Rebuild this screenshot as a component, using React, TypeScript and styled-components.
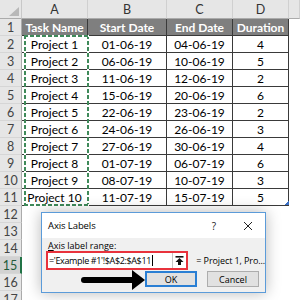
import React from "react";
import styled, { createGlobalStyle } from "styled-components";

const GlobalStyle = createGlobalStyle`
  html, body { margin: 0; padding: 0; background: #fff; }
  body { width: 300px; height: 300px; overflow: hidden; }
  * { box-sizing: border-box; }
`;

const Sheet = styled.div`
  position: relative;
  width: 300px;
  height: 300px;
  overflow: hidden;
  font-family: Lato, "Liberation Sans", sans-serif;
`;

const Grid = styled.div`
  display: grid;
  grid-template-columns: 22px 66px 79px 66px 56px 11px;
  grid-template-rows: 19px repeat(17, 17px);
`;

const Corner = styled.div`
  background: #e6e6e6;
  border-right: 1px solid #c8c8c8;
  border-bottom: 1px solid #ababab;
  display: flex;
  align-items: flex-end;
  justify-content: flex-end;
  padding: 0 2px 2px 0;
`;

const ColHead = styled.div`
  background: #e6e6e6;
  border-right: 1px solid #d0d0d0;
  border-bottom: 1px solid #ababab;
  color: #333;
  font-size: 12.5px;
  display: flex;
  align-items: center;
  justify-content: center;
`;

const RowHead = styled.div<{ $active?: boolean }>`
  background: ${(p) => (p.$active ? "#d2d2d2" : "#e6e6e6")};
  border-right: ${(p) => (p.$active ? "2px solid #217346" : "1px solid #ababab")};
  border-bottom: 1px solid #d6d6d6;
  color: ${(p) => (p.$active ? "#1f5b3a" : "#444")};
  font-size: 12.5px;
  display: flex;
  align-items: center;
  justify-content: center;
`;

const Cell = styled.div<{ $head?: boolean; $table?: boolean }>`
  background: ${(p) => (p.$head ? "#7f7f7f" : "#fff")};
  color: ${(p) => (p.$head ? "#fff" : "#000")};
  font-weight: ${(p) => (p.$head ? 700 : 400)};
  border-right: ${(p) => (p.$table ? "1px solid #3a3a3a" : "none")};
  border-bottom: ${(p) => (p.$table ? "1px solid #3a3a3a" : "none")};
  font-size: 12px;
  white-space: nowrap;
  display: flex;
  align-items: center;
  justify-content: center;
`;

const Ants = styled.div`
  position: absolute;
  left: 24px;
  top: 35px;
  width: 65px;
  height: 171px;
  pointer-events: none;
  background:
    repeating-linear-gradient(90deg, #3f8a5a 0 4px, #fff 4px 6px) top / 100% 2px no-repeat,
    repeating-linear-gradient(90deg, #3f8a5a 0 4px, #fff 4px 6px) bottom / 100% 2px no-repeat,
    repeating-linear-gradient(180deg, #3f8a5a 0 4px, #fff 4px 6px) left / 2px 100% no-repeat,
    repeating-linear-gradient(180deg, #3f8a5a 0 4px, #fff 4px 6px) right / 2px 100% no-repeat;
`;

const ResizeHandle = styled.div`
  position: absolute;
  left: 285px;
  top: 201px;
  width: 4px;
  height: 4px;
  background: linear-gradient(135deg, transparent 50%, #3a6fc4 50%);
`;

const Dialog = styled.div`
  position: absolute;
  left: 41px;
  top: 212px;
  width: 225px;
  height: 81px;
  border: 1px solid #5b9bd9;
  background: #f0f0f0;
  box-shadow: 0 0 14px rgba(0, 0, 0, 0.28);
  font-family: "Segoe UI", "Open Sans", "Noto Sans", sans-serif;
  color: #000;
  display: flex;
  flex-direction: column;
`;

const TitleBar = styled.div`
  height: 25px;
  background: #fff;
  display: flex;
  align-items: center;
  padding-left: 6px;
`;

const Title = styled.span`
  flex: 1;
  font-size: 9.5px;
  letter-spacing: -0.1px;
`;

const TitleBtn = styled.div`
  width: 34px;
  height: 25px;
  display: flex;
  align-items: center;
  justify-content: center;
  font-size: 10px;
  color: #222;
`;

const Body = styled.div`
  flex: 1;
  padding: 2px 0 0 4px;
  display: flex;
  flex-direction: column;
`;

const Label = styled.div`
  height: 11px;
  margin-left: 2px;
  font-size: 9px;
  line-height: 11px;
`;

const InputRow = styled.div`
  display: flex;
  align-items: center;
  height: 19px;
`;

const RedBox = styled.div`
  width: 146px;
  height: 19px;
  border: 2px solid #e8323c;
  background: #fff;
  display: flex;
`;

const InputText = styled.div`
  flex: 1;
  font-size: 9px;
  letter-spacing: -0.35px;
  line-height: 15px;
  padding-left: 1px;
  white-space: nowrap;
  overflow: hidden;
`;

const Caret = styled.span`
  display: inline-block;
  width: 1px;
  height: 11px;
  margin-left: 1px;
  background: #000;
  vertical-align: -2px;
`;

const CollapseBtn = styled.div`
  width: 14px;
  border-left: 1px solid #c6c6c6;
  display: flex;
  align-items: center;
  justify-content: center;
`;

const Preview = styled.span`
  margin-left: 8px;
  font-size: 9px;
  letter-spacing: -0.1px;
  white-space: nowrap;
`;

const ButtonRow = styled.div`
  display: flex;
  gap: 10px;
  margin: 1px 0 0 99px;
`;

const Btn = styled.div<{ $default?: boolean }>`
  width: 52px;
  height: 16px;
  background: #e1e1e1;
  border: ${(p) => (p.$default ? "2px solid #2a7fd4" : "1px solid #adadad")};
  font-size: 9px;
  display: flex;
  align-items: center;
  justify-content: center;
`;

const ArrowSvg = styled.svg`
  position: absolute;
  left: 80px;
  top: 268px;
`;

const cols = ["A", "B", "C", "D", ""];
const header = ["Task Name", "Start Date", "End Date", "Duration"];
const data: string[][] = [
  ["Project 1", "01-06-19", "04-06-19", "4"],
  ["Project 2", "06-06-19", "10-06-19", "5"],
  ["Project 3", "11-06-19", "12-06-19", "2"],
  ["Project 4", "15-06-19", "20-06-19", "6"],
  ["Project 5", "22-06-19", "23-06-19", "2"],
  ["Project 6", "24-06-19", "26-06-19", "3"],
  ["Project 7", "27-06-19", "30-06-19", "4"],
  ["Project 8", "01-07-19", "06-07-19", "6"],
  ["Project 9", "08-07-19", "10-07-19", "3"],
  ["Project 10", "11-07-19", "15-07-19", "5"],
];

export default function App() {
  const rows: React.ReactNode[] = [];
  for (let r = 1; r <= 17; r++) {
    rows.push(
      <RowHead key={`h${r}`} $active={r === 15}>
        {r}
      </RowHead>
    );
    for (let c = 0; c < 5; c++) {
      let text = "";
      let head = false;
      let table = false;
      if (c < 4 && r === 1) {
        text = header[c];
        head = true;
        table = true;
      } else if (c < 4 && r <= 11) {
        text = data[r - 2][c];
        table = true;
      }
      rows.push(
        <Cell key={`c${r}-${c}`} $head={head} $table={table}>
          {text}
        </Cell>
      );
    }
  }

  return (
    <Sheet>
      <GlobalStyle />
      <Grid>
        <Corner>
          <svg width="10" height="9" viewBox="0 0 10 9">
            <polygon points="10,0 10,9 0,9" fill="#b8b8b8" />
          </svg>
        </Corner>
        {cols.map((c, i) => (
          <ColHead key={i}>{c}</ColHead>
        ))}
        {rows}
      </Grid>
      <Ants />
      <ResizeHandle />
      <Dialog>
        <TitleBar>
          <Title>Axis Labels</Title>
          <TitleBtn>?</TitleBtn>
          <TitleBtn>
            <svg width="10" height="10" viewBox="0 0 10 10">
              <path d="M1 1 L9 9 M9 1 L1 9" stroke="#222" strokeWidth="1" />
            </svg>
          </TitleBtn>
        </TitleBar>
        <Body>
          <Label>
            <u>A</u>xis label range:
          </Label>
          <InputRow>
            <RedBox>
              <InputText>
                ='Example #1'!$A$2:$A$11
                <Caret />
              </InputText>
              <CollapseBtn>
                <svg width="9" height="9" viewBox="0 0 9 9">
                  <rect x="0.5" y="0" width="8" height="1.6" fill="#111" />
                  <polygon points="4.5,2 8.5,6 6,6 6,9 3,9 3,6 0.5,6" fill="#111" />
                </svg>
              </CollapseBtn>
            </RedBox>
            <Preview>= Project 1, Pro...</Preview>
          </InputRow>
          <ButtonRow>
            <Btn $default>OK</Btn>
            <Btn>Cancel</Btn>
          </ButtonRow>
        </Body>
      </Dialog>
      <ArrowSvg width="68" height="24" viewBox="0 0 68 24">
        <line x1="4" y1="12" x2="54" y2="12" stroke="#000" strokeWidth="6" strokeLinecap="round" />
        <polygon points="52,2 65,12 52,22" fill="#000" />
      </ArrowSvg>
    </Sheet>
  );
}
